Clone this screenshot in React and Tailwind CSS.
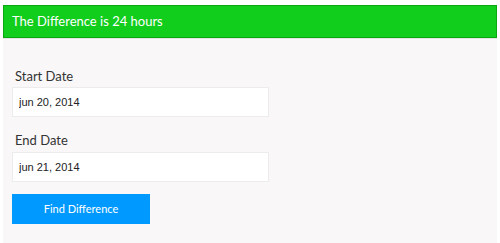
import { useState } from "react";

export default function App() {
  const [start, setStart] = useState("jun 20, 2014");
  const [end, setEnd] = useState("jun 21, 2014");

  return (
    <div className="w-[500px] h-[243px] bg-white pt-[5px] px-[3px] overflow-hidden font-['Lato',sans-serif]">
      {/* result banner */}
      <div className="h-[33px] flex items-center pl-[8px] bg-[#11cd1c] border border-[#0aa80f] text-white text-[13px]">
        The Difference is 24 hours
      </div>

      {/* form */}
      <div className="h-[205px] bg-[#f9f7f8] border-t border-[#e4e4e4] px-[9px] pt-[28px]">
        <label className="block h-[18px] leading-[18px] text-[13px] text-[#333] pl-[3px] mb-[2px]">Start Date</label>
        <input
          value={start}
          onChange={(e) => setStart(e.target.value)}
          className="block w-[257px] h-[30px] bg-white border border-[#ececec] pl-[6px] pb-[1px] text-[11px] text-[#222] outline-none font-['Liberation_Sans',Arial,sans-serif]"
        />

        <label className="block h-[18px] leading-[18px] text-[13px] text-[#333] pl-[3px] mt-[14px] mb-[3px]">End Date</label>
        <input
          value={end}
          onChange={(e) => setEnd(e.target.value)}
          className="block w-[257px] h-[30px] bg-white border border-[#ececec] pl-[6px] pb-[1px] text-[11px] text-[#222] outline-none font-['Liberation_Sans',Arial,sans-serif]"
        />

        <button className="block mt-[12px] w-[138px] h-[30px] bg-[#0099ff] text-white text-[11px]">
          Find Difference
        </button>
      </div>
    </div>
  );
}
